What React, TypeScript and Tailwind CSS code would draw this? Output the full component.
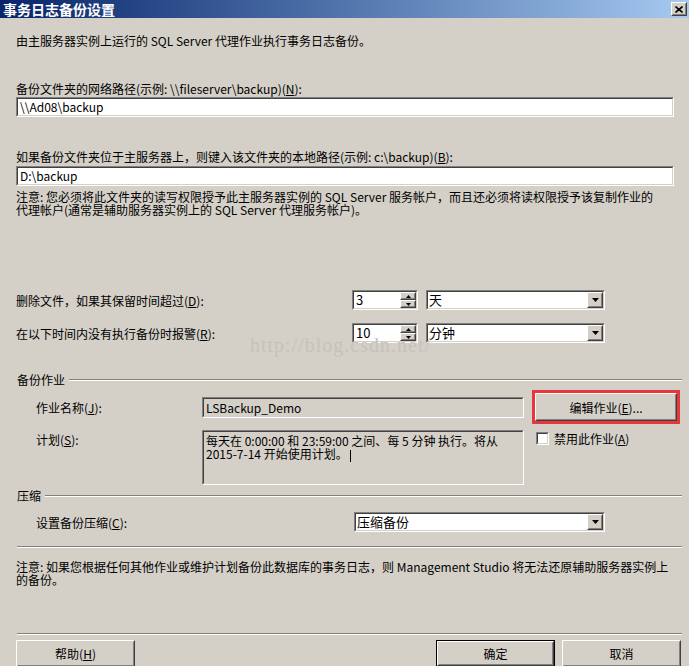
import React from "react";

const Sunken = ({ className = "", inner = "", children }: { className?: string; inner?: string; children?: React.ReactNode }) => (
  <div className={"shrink-0 border border-t-[#808080] border-l-[#808080] border-b-white border-r-white " + className}>
    <div className={"h-full w-full border border-t-[#404040] border-l-[#404040] border-b-[#d4d0c8] border-r-[#d4d0c8] " + inner}>{children}</div>
  </div>
);

const Raised = ({ className = "", inner = "", children }: { className?: string; inner?: string; children?: React.ReactNode }) => (
  <div className={"shrink-0 border border-t-white border-l-white border-b-[#404040] border-r-[#404040] bg-[#d4d0c8] " + className}>
    <div className={"h-full w-full border border-t-[#d4d0c8] border-l-[#d4d0c8] border-b-[#808080] border-r-[#808080] " + inner}>{children}</div>
  </div>
);

const DownTri = () => (
  <svg width="7" height="4" viewBox="0 0 7 4"><path d="M0 0h7L3.5 4z" fill="#000" /></svg>
);

const Spinner = ({ value }: { value: string }) => (
  <Sunken className="w-[66px] h-[20px]" inner="bg-white flex items-stretch">
    <div className="flex-1 pl-[2px] text-[13px] leading-[16px]">{value}</div>
    <div className="w-[16px] flex flex-col">
      <Raised className="h-[8px] w-[16px]" inner="flex items-center justify-center">
        <svg width="5" height="3" viewBox="0 0 5 3"><path d="M2.5 0L5 3H0z" fill="#000" /></svg>
      </Raised>
      <Raised className="h-[8px] w-[16px]" inner="flex items-center justify-center">
        <svg width="5" height="3" viewBox="0 0 5 3"><path d="M0 0h5L2.5 3z" fill="#000" /></svg>
      </Raised>
    </div>
  </Sunken>
);

const Dropdown = ({ value, className = "" }: { value: string; className?: string }) => (
  <Sunken className={"h-[20px] " + className} inner="bg-white flex items-stretch">
    <div className="flex-1 pl-[1px] text-[13px] leading-[16px]">{value}</div>
    <Raised className="w-[16px] h-[16px]" inner="flex items-center justify-center">
      <DownTri />
    </Raised>
  </Sunken>
);

const Etched = () => (
  <div className="flex-1 h-[2px] border-t border-t-[#808080] border-b border-b-white" />
);

const U = ({ c }: { c: string }) => <span className="underline">{c}</span>;

export default function App() {
  return (
    <div className="relative w-[689px] h-[666px] overflow-hidden bg-[#d4d0c8] text-black text-[12px] leading-[13px] font-['Noto_Sans_CJK_SC','Noto_Sans',sans-serif]">
      {/* title bar */}
      <div className="h-[18px] flex items-center justify-between bg-linear-to-r from-[#0a246a] to-[#a6caf0]">
        <div className="pl-[3px] text-white font-bold text-[14px] leading-[18px]">事务日志备份设置</div>
        <Raised className="w-[16px] h-[14px] mr-[2px]" inner="flex items-center justify-center">
          <svg width="8" height="7" viewBox="0 0 8 7">
            <path d="M0.5 0.5L7.5 6.5M7.5 0.5L0.5 6.5" stroke="#000" strokeWidth="1.6" />
          </svg>
        </Raised>
      </div>

      <div className="flex flex-col pl-[16px] pr-[15px]">
        <div className="mt-[16px] whitespace-nowrap">由主服务器实例上运行的 SQL Server 代理作业执行事务日志备份。</div>

        <div className="mt-[35px] whitespace-nowrap">备份文件夹的网络路径(示例: \\fileserver\backup)(<U c="N" />):</div>
        <Sunken className="mt-[2px] h-[20px]" inner="bg-white pl-[2px] text-[12px] leading-[16px]">\\Ad08\backup</Sunken>

        <div className="mt-[33px] whitespace-nowrap">如果备份文件夹位于主服务器上，则键入该文件夹的本地路径(示例: c:\backup)(<U c="B" />):</div>
        <Sunken className="mt-[3px] h-[20px]" inner="bg-white pl-[2px] text-[12px] leading-[16px]">D:\backup</Sunken>

        <div className="mt-[4px] whitespace-nowrap">
          注意: 您必须将此文件夹的读写权限授予此主服务器实例的 SQL Server 服务帐户，而且还必须将读权限授予该复制作业的
          <br />
          代理帐户(通常是辅助服务器实例上的 SQL Server 代理服务帐户)。
        </div>

        <div className="mt-[74px] h-[20px] flex items-center">
          <div className="w-[336px] shrink-0">删除文件，如果其保留时间超过(<U c="D" />):</div>
          <Spinner value="3" />
          <Dropdown value="天" className="ml-[8px] w-[179px]" />
        </div>

        <div className="mt-[13px] h-[20px] flex items-center">
          <div className="w-[336px] shrink-0">在以下时间内没有执行备份时报警(<U c="R" />):</div>
          <Spinner value="10" />
          <Dropdown value="分钟" className="ml-[8px] w-[179px]" />
        </div>

        {/* 备份作业 */}
        <div className="mt-[30px] flex items-center mr-[-8px]">
          <span className="pl-[1px] pr-[4px] shrink-0">备份作业</span>
          <Etched />
        </div>

        <div className="mt-[4px] h-[34px] flex items-center pl-[20px] mr-[-8px]">
          <div className="w-[166px] shrink-0">作业名称(<U c="J" />):</div>
          <Sunken className="w-[322px] h-[21px]" inner="pl-[2px] text-[12px] leading-[17px]">LSBackup_Demo</Sunken>
          <div className="shrink-0 ml-[8px] w-[148px] h-[34px] border-[3px] border-[#e8363a]">
            <Raised className="w-full h-full" inner="flex items-center justify-center">编辑作业(<U c="E" />)...</Raised>
          </div>
        </div>

        <div className="mt-[6px] flex items-start pl-[20px]">
          <div className="w-[166px] shrink-0 pt-[3px]">计划(<U c="S" />):</div>
          <Sunken className="w-[322px] h-[55px]" inner="pl-[2px] pt-[2px] leading-[13px] whitespace-nowrap">
            每天在 0:00:00 和 23:59:00 之间、每 5 分钟 执行。将从
            <br />
            2015-7-14 开始使用计划。<span className="inline-block w-[1px] h-[12px] bg-black align-middle ml-[2px]" />
          </Sunken>
          <div className="shrink-0 ml-[12px] mt-[2px] flex items-center">
            <Sunken className="w-[13px] h-[13px]" inner="bg-white" />
            <span className="ml-[5px]">禁用此作业(<U c="A" />)</span>
          </div>
        </div>

        {/* 压缩 */}
        <div className="mt-[4px] flex items-center mr-[-8px]">
          <span className="pl-[1px] pr-[4px] shrink-0">压缩</span>
          <Etched />
        </div>

        <div className="mt-[10px] h-[20px] flex items-center pl-[20px]">
          <div className="w-[318px] shrink-0">设置备份压缩(<U c="C" />):</div>
          <Dropdown value="压缩备份" className="w-[251px]" />
        </div>

        <div className="mt-[14px] flex pl-[1px] mr-[-8px]"><Etched /></div>

        <div className="mt-[12px] whitespace-nowrap">
          注意: 如果您根据任何其他作业或维护计划备份此数据库的事务日志，则 Management Studio 将无法还原辅助服务器实例上
          <br />
          的备份。
        </div>

        <div className="mt-[47px] flex pl-[1px] mr-[-8px]"><Etched /></div>

        <div className="mt-[5px] flex items-start mr-[-7px]">
          <Raised className="w-[119px] h-[27px]" inner="flex items-center justify-center">帮助(<U c="H" />)</Raised>
          <div className="flex-1" />
          <div className="shrink-0 border border-black">
            <Raised className="w-[117px] h-[25px]" inner="flex items-center justify-center">确定</Raised>
          </div>
          <Raised className="ml-[7px] w-[119px] h-[27px]" inner="flex items-center justify-center">取消</Raised>
        </div>
      </div>

      {/* watermark */}
      <div className="absolute left-[250px] top-[334px] text-[20px] leading-[22px] text-[#c6c2ba] font-['Liberation_Serif',serif] tracking-[1px]">
        http://blog.csdn.net/
      </div>
    </div>
  );
}
